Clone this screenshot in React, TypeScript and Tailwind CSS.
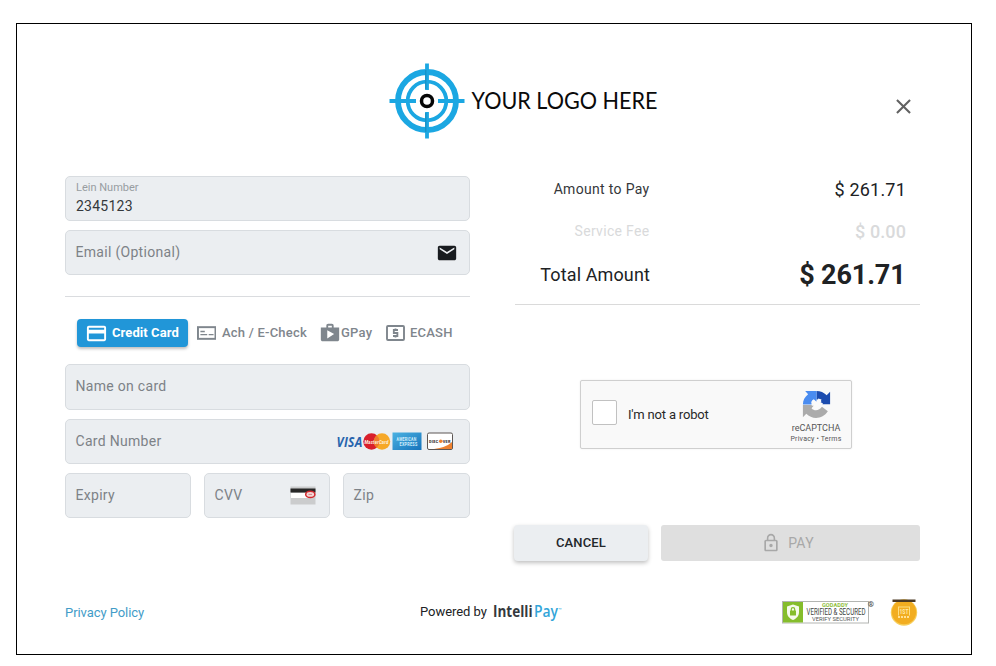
import type { ReactNode } from "react";
import { MdClose, MdCreditCard, MdEmail, MdLockOutline, MdShop } from "react-icons/md";

function TargetLogo() {
  return (
    <svg width="76" height="76" viewBox="-38 -38 76 76" fill="none">
      <circle r="29" stroke="#1ba7e2" strokeWidth="5.8" />
      <circle r="19.3" stroke="#1ba7e2" strokeWidth="3.8" />
      <path d="M0-37.5V-11M0 37.5V11M-37.5 0H-11M37.5 0H11" stroke="#1ba7e2" strokeWidth="3.8" />
      <path d="M-1.2-31V-12M-1.2 31V12" stroke="#1689bd" strokeWidth="1" />
      <circle r="5.5" stroke="#060606" strokeWidth="3.5" />
    </svg>
  );
}

function LogoText() {
  return (
    <svg width="190" height="30" viewBox="0 0 190 30" className="overflow-visible">
      <text x="0.5" y="23" fontFamily="Lato, sans-serif" fontSize="22.5" textLength="186" lengthAdjust="spacingAndGlyphs" fill="#0a0a0a">
        YOUR LOGO HERE
      </text>
    </svg>
  );
}

function CheckIcon() {
  return (
    <svg width="20" height="14" viewBox="0 0 20 14" fill="none" stroke="#7f868d">
      <rect x="1" y="1" width="18" height="12" strokeWidth="2" />
      <path d="M3.5 5.5H8M3.5 8.7H10.5M12 8.7H17" strokeWidth="1.4" />
    </svg>
  );
}

function CashIcon() {
  return (
    <svg width="19" height="16" viewBox="0 0 19 16" fill="none" stroke="#7f868d">
      <rect x="1" y="1" width="17" height="14" rx="1" strokeWidth="1.9" />
      <path d="M12 5H7.8V8H11.4V11H7M9.5 3.5V5M9.5 11V12.5" strokeWidth="1.8" />
    </svg>
  );
}

function CardBrands() {
  return (
    <svg width="118" height="20" viewBox="0 0 118 20" className="overflow-visible">
      <text x="0.5" y="15" fontFamily="Open Sans, sans-serif" fontWeight="700" fontStyle="italic" fontSize="13.5" textLength="26" lengthAdjust="spacingAndGlyphs" fill="#2764ad">
        VISA
      </text>
      <circle cx="35.5" cy="9.5" r="8.2" fill="#d91f2b" />
      <circle cx="46" cy="9.5" r="8.2" fill="#f6a828" />
      <path d="M40.7 3.3a8.2 8.2 0 0 1 0 12.400a8.200 8.200 0 0 1 0-12.400" fill="#ee7a2b" />
      <text x="28.5" y="11.6" fontFamily="Roboto, sans-serif" fontWeight="700" fontStyle="italic" fontSize="6" textLength="24" lengthAdjust="spacingAndGlyphs" fill="#fff2e2">
        MasterCard
      </text>
      <defs>
        <linearGradient id="amex" x1="0" y1="0" x2="1" y2="1">
          <stop offset="0" stopColor="#4bb2e2" />
          <stop offset="1" stopColor="#1673bb" />
        </linearGradient>
      </defs>
      <rect x="56.5" y="0.5" width="29" height="17.5" fill="url(#amex)" />
      <text x="60.5" y="8.8" fontFamily="Roboto, sans-serif" fontWeight="700" fontSize="4.5" textLength="20" lengthAdjust="spacingAndGlyphs" fill="#d4effc">
        AMERICAN
      </text>
      <text x="63.5" y="13.8" fontFamily="Roboto, sans-serif" fontWeight="700" fontSize="4.5" textLength="18" lengthAdjust="spacingAndGlyphs" fill="#d4effc">
        EXPRESS
      </text>
      <rect x="91.5" y="1" width="25" height="16.5" rx="1.5" fill="#fff" stroke="#5c5654" />
      <path d="M116 10V17H98Q110 15.5 116 10" fill="#ee8130" />
      <g fontFamily="Roboto, sans-serif" fontWeight="900" fontSize="4.2" fill="#3a3535">
        <text x="93" y="10.6" textLength="9.5" lengthAdjust="spacingAndGlyphs">DISC</text>
        <circle cx="104.7" cy="9.2" r="1.8" fill="#ee8130" />
        <text x="106.8" y="10.6" textLength="8" lengthAdjust="spacingAndGlyphs">VER</text>
      </g>
    </svg>
  );
}

function CvvIcon() {
  return (
    <svg width="26" height="19" viewBox="0 0 26 19">
      <rect x="0.5" y="0.5" width="25" height="18" fill="#cbcccd" />
      <rect x="0.5" y="2.5" width="25" height="4" fill="#272727" />
      <rect x="1" y="7" width="19" height="5" fill="#fff" />
      <ellipse cx="20.3" cy="8.4" rx="4.6" ry="3.2" fill="#f3d6d6" stroke="#d2282d" strokeWidth="1.5" />
      <path d="M18.5 8.4h3.5" stroke="#c88" strokeWidth="1" />
    </svg>
  );
}

function RecaptchaLogo() {
  return (
    <svg width="29" height="29" viewBox="0 0 64 64">
      <path d="M62 31.5V4L54.5 11.5C48.5 5 40.5 2 32 2V21C37 20 41 22 43 25L37 31.5Z" fill="#1c4caf" />
      <path d="M32 2H7L13.5 9.5C6 15.5 2 22.5 2 32H21C20.5 27 21.5 23 25 21L32 28Z" fill="#4a8cf0" />
      <path d="M2 33V60L9.5 52.5C22 66 46 65 57 47L44 37C38 46 27 47 21 40L27 33Z" fill="#ababab" />
      <path d="M20 35L27 31.5L20 27L26 20.5L32 26L36 19L43 21L41 27L46 29L44 37L36 35L34 43L27 40L26 35Z" fill="#fafafa" />
    </svg>
  );
}

function VerifiedSeal() {
  return (
    <svg width="94" height="24" viewBox="0 0 94 24" className="overflow-visible">
      <rect x="0.5" y="1.5" width="86" height="21.5" fill="#fff" stroke="#b3b5b2" />
      <rect x="1" y="2" width="20" height="20.5" fill="#85bd2c" />
      <path d="M11 4.5L17 6.5V12C17 16 14.5 18.5 11 20C7.5 18.5 5 16 5 12V6.5Z" fill="#f5faec" />
      <rect x="8" y="10.5" width="6" height="5" rx="0.5" fill="#85bd2c" />
      <path d="M9.3 11V9.3a1.7 1.7 0 0 1 3.4 0V11" fill="none" stroke="#85bd2c" strokeWidth="1.2" />
      <g fontFamily="Roboto, sans-serif">
        <text x="40" y="7" fontWeight="700" fontSize="5" textLength="26" lengthAdjust="spacingAndGlyphs" fill="#8fbe3d">GODADDY</text>
        <text x="24.5" y="14.6" fontSize="8.5" textLength="59" lengthAdjust="spacingAndGlyphs" fill="#3d4340">VERIFIED &amp; SECURED</text>
        <text x="30" y="20.8" fontSize="5.5" textLength="47" lengthAdjust="spacingAndGlyphs" fill="#555a58">VERIFY SECURITY</text>
        <text x="85.8" y="6.5" fontWeight="700" fontSize="8" fill="#444">®</text>
      </g>
    </svg>
  );
}

function GoldBadge() {
  return (
    <svg width="28" height="30" viewBox="0 0 28 30">
      <circle cx="14" cy="15.5" r="13.2" fill="#f7ce5c" />
      <circle cx="14" cy="15" r="12.2" fill="#f2ad20" />
      <rect x="2.5" y="2.5" width="23" height="2.5" fill="#4c3a24" />
      <path d="M8 10H20M8.5 10V18.500M19.500 10V18.500" stroke="#ffdf80" strokeWidth="1" />
      <text x="9.5" y="17" fontFamily="Roboto, sans-serif" fontWeight="700" fontSize="6.5" textLength="9" lengthAdjust="spacingAndGlyphs" fill="#ffe9ac">1ST</text>
      <path d="M8 20H20" stroke="#ffe196" strokeWidth="2" strokeDasharray="2 1" />
    </svg>
  );
}

function Field({ label, className, children }: { label: string; className: string; children?: ReactNode }) {
  return (
    <div className={`flex items-center justify-between rounded-[5px] border border-[#d8dce0] bg-[#ebeef1] pl-[9.5px] text-[14px] tracking-[0.3px] text-[#7d8287] ${className}`}>
      <span>{label}</span>
      {children}
    </div>
  );
}

export default function App() {
  return (
    <div className="h-[666px] w-[996px] overflow-hidden bg-white pl-4 pt-[23px] font-['Roboto',sans-serif]">
      <main className="flex h-[632px] w-[956px] flex-col border border-black px-12">
        <header className="flex h-[152px] shrink-0 items-start">
          <div className="ml-[324px] mt-[38.5px] flex items-center gap-[6px]">
            <TargetLogo />
            <LogoText />
          </div>
          <button className="ml-auto mr-[7px] mt-[70px] text-[#626262]" aria-label="Close">
            <MdClose size={25} />
          </button>
        </header>

        <div className="flex gap-[45px]">
          <section className="w-[405px]">
            <div className="flex h-[45px] flex-col rounded-[5px] border border-[#d8dce0] bg-[#ebeef1] pl-[10px] pt-1">
              <span className="text-[11px] leading-[13px] tracking-normal text-[#989da1]">Lein Number</span>
              <span className="mt-[4px] text-[14px] leading-[17px] tracking-[0.25px] text-[#34383c]">2345123</span>
            </div>
            <Field label="Email (Optional)" className="mt-[9px] h-[45px] pr-[11px]">
              <MdEmail size={22} className="text-[#181b1f]" />
            </Field>
            <hr className="mt-[21px] border-[#dadcdf]" />
            <div className="mt-[22px] flex h-7 items-center pl-3 text-[13px] font-medium tracking-[0.22px] text-[#7f868d]">
              <button className="flex h-7 w-[111px] items-center gap-[4px] rounded-[4px] bg-[#2196d8] pl-[8px] font-bold tracking-[0.08px] text-white shadow-[0_2px_3px_rgba(0,0,0,0.25)]">
                <MdCreditCard size={23} className="shrink-0" />
                <span className="whitespace-nowrap">Credit Card</span>
              </button>
              <button className="ml-[9px] flex w-[110px] items-center gap-[5.5px] whitespace-nowrap">
                <CheckIcon />
                Ach / E-Check
              </button>
              <button className="ml-[12px] flex w-[54px] items-center whitespace-nowrap">
                <MdShop size={22} className="shrink-0" />
                GPay
              </button>
              <button className="ml-[13px] flex items-center gap-[5px]">
                <CashIcon />
                ECASH
              </button>
            </div>
            <Field label="Name on card" className="mt-[17px] h-[46px] pb-[2px]" />
            <Field label="Card Number" className="mt-[9px] h-[45px] pr-[15px]">
              <CardBrands />
            </Field>
            <div className="mt-[9px] flex gap-[13px]">
              <Field label="Expiry" className="h-[45px] w-[126px]" />
              <Field label="CVV" className="h-[45px] w-[126px] pr-[13px]">
                <CvvIcon />
              </Field>
              <Field label="Zip" className="h-[45px] w-[127px]" />
            </div>
          </section>

          <section className="w-[405px]">
            <div className="flex h-[129px] flex-col border-b border-[#dadada] text-[#202224]">
              <div className="flex h-[27px] items-center justify-between pr-[14px]">
                <span className="w-[134.5px] text-right text-[14px] tracking-[0.32px] text-[#35373a]">Amount to Pay</span>
                <span className="text-[18px] tracking-[0.2px]">$ 261.71</span>
              </div>
              <div className="mt-[15px] flex h-[27px] items-center justify-between pr-[14px] text-[#d9dadb]">
                <span className="w-[134.5px] text-right text-[14px] tracking-[0.32px]">Service Fee</span>
                <span className="text-[18px] font-medium tracking-[0.1px]">$ 0.00</span>
              </div>
              <div className="mt-[14px] flex h-[32px] items-center justify-between pr-[14.5px]">
                <span className="w-[135px] pb-[2px] text-right text-[18px] tracking-[0.12px]">Total Amount</span>
                <span className="text-[27px] font-bold tracking-[-0.15px]">$ 261.71</span>
              </div>
            </div>

            <div className="ml-[65px] mt-[75px] flex h-[69px] w-[272px] items-center rounded-[2px] border border-[#cfcfcf] bg-[#f9f9f9] shadow-[0_0_2px_rgba(0,0,0,0.08)]">
              <div className="mb-[4px] ml-[11px] h-[25px] w-[25px] rounded-[2px] border border-[#c1c1c1] bg-white" />
              <span className="ml-[11px] text-[13px] tracking-[-0.18px] text-[#282828]">I'm not a robot</span>
              <div className="ml-auto mr-[8px] flex w-[54px] flex-col items-center pt-[4px] text-[#555]">
                <RecaptchaLogo />
                <span className="mt-[4px] text-[9px] leading-[11px]">reCAPTCHA</span>
                <span className="mt-px whitespace-nowrap text-[7px] leading-[9px] tracking-[0.2px]">Privacy • Terms</span>
              </div>
            </div>

            <div className="mt-[76px] flex gap-[13px]">
              <button className="-ml-px h-9 w-[134px] rounded-[4px] bg-[#ebeef1] text-[13px] font-medium tracking-[0.15px] text-[#23272b] shadow-[0_2px_4px_rgba(0,0,0,0.25)]">
                CANCEL
              </button>
              <button className="flex h-9 w-[259px] items-center justify-center gap-[7px] rounded-[3px] bg-[#dfdfdf] pr-[6px] text-[14px] tracking-[0.3px] text-[#a8a8a8]">
                <MdLockOutline size={20} />
                PAY
              </button>
            </div>
          </section>
        </div>

        <footer className="mt-[25px] grid h-[52px] grid-cols-[355px_1fr_auto] items-center text-[13px] text-[#202224]">
          <a className="pt-px tracking-[-0.07px] text-[#439cc8]">Privacy Policy</a>
          <div className="flex items-center gap-[6px]">
            <span className="tracking-[-0.05px]">Powered by</span>
            <svg width="72" height="22" viewBox="0 0 72 22" fontFamily="Open Sans, sans-serif" fontSize="15.5" className="overflow-visible">
              <text x="0" y="16" fontWeight="700" textLength="39.5" lengthAdjust="spacingAndGlyphs" fill="#34393e">Intelli</text>
              <text x="41" y="16" fontWeight="600" textLength="24" lengthAdjust="spacingAndGlyphs" fill="#32a5d9">Pay</text>
              <text x="65.5" y="9.5" fontSize="4" fill="#32a5d9">™</text>
            </svg>
          </div>
          <div className="mr-[2px] flex items-center gap-[14px] pr-[3px]">
            <VerifiedSeal />
            <GoldBadge />
          </div>
        </footer>
      </main>
    </div>
  );
}
